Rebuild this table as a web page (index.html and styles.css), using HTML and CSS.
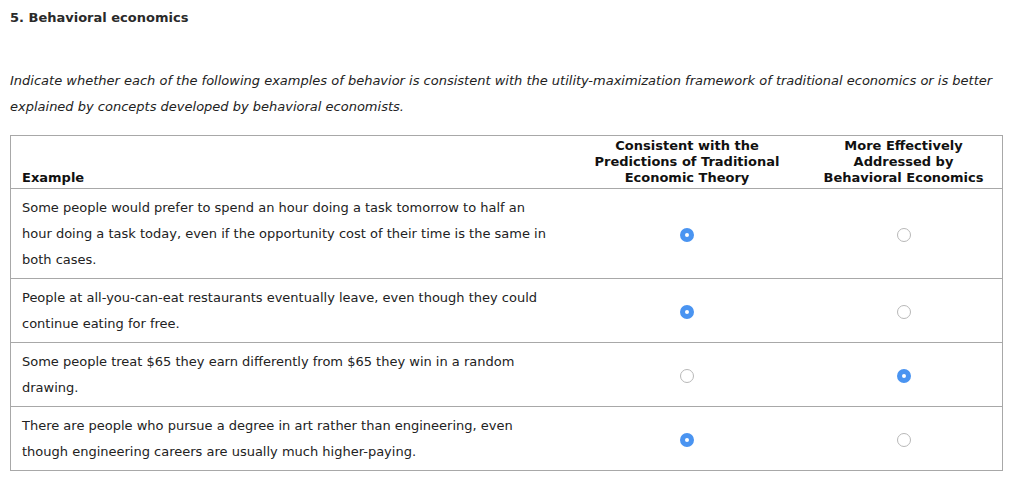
FILE: index.html
```html
<!DOCTYPE html>
<html lang="en">
<head>
<meta charset="utf-8">
<title>Behavioral economics</title>
<link rel="stylesheet" href="styles.css">
</head>
<body>
<div class="question">
  <h2 class="q-title">5. Behavioral economics</h2>
  <p class="q-prompt">Indicate whether each of the following examples of behavior is consistent with the utility-maximization framework of traditional economics or is better explained by concepts developed by behavioral economists.</p>
  <table class="grid">
    <thead>
      <tr>
        <th class="col-example">Example</th>
        <th class="col-choice col-a">Consistent with the Predictions of Traditional Economic Theory</th>
        <th class="col-choice col-b">More Effectively Addressed by Behavioral Economics</th>
      </tr>
    </thead>
    <tbody>
      <tr>
        <td class="example">Some people would prefer to spend an hour doing a task tomorrow to half an hour doing a task today, even if the opportunity cost of their time is the same in both cases.</td>
        <td class="choice"><span class="radio checked"></span></td>
        <td class="choice"><span class="radio"></span></td>
      </tr>
      <tr>
        <td class="example">People at all-you-can-eat restaurants eventually leave, even though they could continue eating for free.</td>
        <td class="choice"><span class="radio checked"></span></td>
        <td class="choice"><span class="radio"></span></td>
      </tr>
      <tr>
        <td class="example">Some people treat $65 they earn differently from $65 they win in a random drawing.</td>
        <td class="choice"><span class="radio"></span></td>
        <td class="choice"><span class="radio checked"></span></td>
      </tr>
      <tr>
        <td class="example">There are people who pursue a degree in art rather than engineering, even though engineering careers are usually much higher-paying.</td>
        <td class="choice"><span class="radio checked"></span></td>
        <td class="choice"><span class="radio"></span></td>
      </tr>
    </tbody>
  </table>
</div>
</body>
</html>
```

FILE: styles.css
```css
html, body {
  margin: 0;
  padding: 0;
  background: #ffffff;
}

body {
  font-family: "DejaVu Sans", Verdana, sans-serif;
  font-size: 13px;
  color: #222222;
}

.question {
  padding: 10px 10px 0 10px;
  width: 993px;
}

.q-title {
  margin: 0;
  font-size: 13px;
  font-weight: bold;
  line-height: 16px;
  color: #2a2a2a;
}

.q-prompt {
  margin: 42px 0 15px 0;
  font-style: italic;
  line-height: 26px;
  color: #222222;
}

.grid {
  width: 993px;
  border-collapse: collapse;
  border: 1px solid #a8a8a8;
  table-layout: fixed;
}

.grid th {
  font-weight: bold;
  line-height: 16px;
  padding: 2px 11px 2px 11px;
  vertical-align: bottom;
  border-bottom: 1px solid #a8a8a8;
  color: #111111;
}

.col-example {
  width: 536px;
  text-align: left;
}

.col-a {
  width: 214px;
  text-align: center;
}

.col-b {
  text-align: center;
}

.grid td {
  border-top: 1px solid #a8a8a8;
  line-height: 26px;
  padding: 6px 11px 5px 11px;
}

.example {
  padding-right: 30px;
}

.choice {
  text-align: center;
  vertical-align: middle;
}

.radio {
  display: inline-block;
  box-sizing: border-box;
  width: 14px;
  height: 14px;
  border-radius: 50%;
  border: 1px solid #b8b8b8;
  background: #ffffff;
  vertical-align: middle;
}

.radio.checked {
  border: 5px solid #4a94f1;
  background: #ffffff;
}
```
